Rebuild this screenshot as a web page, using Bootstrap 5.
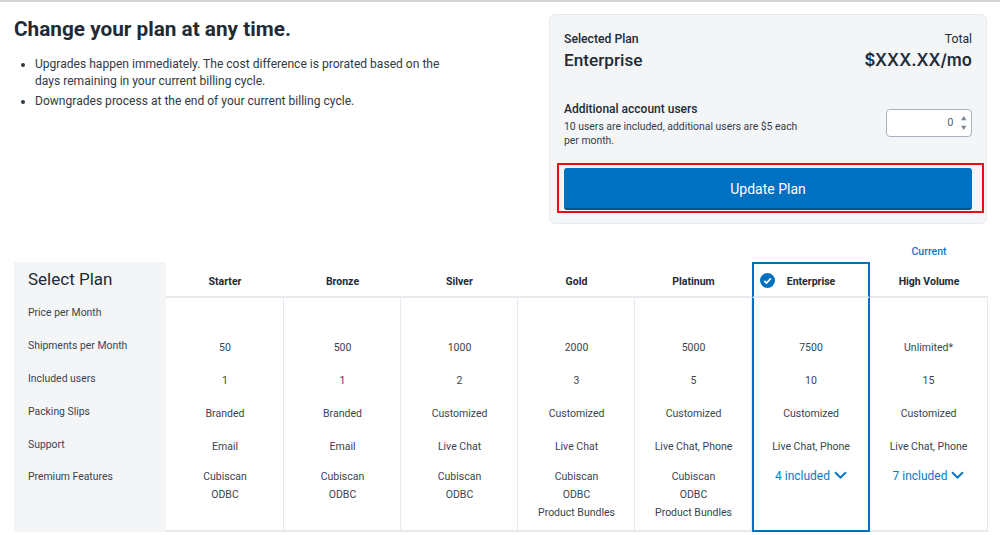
<!DOCTYPE html>
<html lang="en">
<head>
<meta charset="utf-8">
<title>Change plan</title>
<link rel="stylesheet" href="https://cdn.jsdelivr.net/npm/bootstrap@5.3.0/dist/css/bootstrap.min.css">
<style>
html,body{height:535px;overflow:hidden}
body{font-family:Roboto,"Liberation Sans",sans-serif;color:#212b36;background:#fff;border-top:2px solid #d4d5d7;font-size:12px}
.page-wrap{padding:0 12px 0 14px}
.top-area{height:239px;padding:12px 1px 0 0}
.main-title{font-size:20.75px;font-weight:700;line-height:30px;margin:0 0 11.5px}
.notes{width:435px;padding-left:21px;margin:0;line-height:17px;color:#2f3a45;font-size:12.07px}
.notes li{margin-bottom:3px}
.summary{width:438px;height:210px;background:#f4f5f7;border:1px solid #e7e9ec;border-radius:6px;padding:16px 14px 0}
.lbl-sm{line-height:16px;font-size:12.2px}
.lbl-med{font-weight:500;line-height:18px}
.lbl-sm.lbl-med{line-height:16px}
.plan-name{font-size:17.2px;font-weight:500;line-height:27px}
.plan-total{font-family:Inter,Roboto,sans-serif;font-size:16.7px;font-weight:600;line-height:27px}
.extra-row{margin-top:26px;height:49px}
.extra-note{font-size:10.4px;line-height:14px;width:245px;color:#333d48;margin-top:2px}
.num-box{width:86px;height:28px;background:#fff;border:1px solid #a9b3bf;border-radius:4px;margin-top:9px;padding-right:5px}
.num-box input{width:60px;border:0;background:transparent;text-align:right;font-size:11px;color:#555f6a;padding:0;outline:0}
.spin{width:5.5px;height:14px;margin-left:7px}
.cta-frame{border:2.5px solid #ee0a14;margin:14px 0 0 -7px;padding:2.5px 10px 1px 5px;width:427px;height:50px}
.cta-btn{display:block;width:100%;height:42px;background:#0070c0;border:0;border-bottom:2px solid #00508c;border-radius:3px;color:#fff;font-size:14px;padding:4px 0 0}
.plan-grid{table-layout:fixed;width:974px;border-collapse:separate;border-spacing:0}
.plan-grid td,.plan-grid th{padding:0;text-align:center;vertical-align:top;font-weight:400}
.r-cur{height:21px}
.r-cur th{font-size:10.5px;font-weight:500;color:#0a78c8;vertical-align:middle}
.r-head{height:36px}
.r-head th{font-size:10.5px;font-weight:700;vertical-align:top;padding-top:11px;line-height:18px;border-bottom:2px solid #e6e9ed}
.r-body{height:33px}
.r-last{height:69px}
.plan-grid .side{background:#f4f5f7;text-align:left;padding:0 0 0 14px;font-size:10.4px;color:#3a444f;border:0}
.plan-grid .side-head{font-size:17px;font-weight:400;color:#212b36;line-height:24px;padding-top:5px;border:0}
.plan-grid .val{font-size:10.5px;line-height:18px;padding:8px 0 0 1px;color:#3a444f;border-right:1px solid #e6e9ed}
.plan-grid .val.sel-col,.plan-grid .val:last-child{padding-left:0}
.plan-grid .side-txt{line-height:18px;padding-top:6px}
.r-last .val{padding-top:5px}
.r-last .side-txt{padding-top:5px}
.plan-grid .r-last .more-cell{padding-top:4px}
.r-last td{border-bottom:2px solid #e6e9ed}
.r-last td.side{border-bottom:0}
.plan-grid .sel-col{border-left:2px solid #0070c0;border-right:2px solid #0070c0}
.plan-grid th.sel-top{border-top:2px solid #0070c0;padding-top:9px;position:relative}
.plan-grid td.sel-end{border-bottom:2px solid #0070c0}
.sel-check{position:absolute;left:6px;top:9px;width:15px;height:15px}
.more-link{color:#0a78c8;font-size:12px;line-height:18px;text-decoration:none}
.more-link svg{width:13px;height:8px;margin-left:1px;vertical-align:1px}
</style>
</head>
<body>
<div class="page-wrap">
  <div class="top-area d-flex justify-content-between">
    <div>
      <h1 class="main-title">Change your plan at any time.</h1>
      <ul class="notes">
        <li>Upgrades happen immediately. The cost difference is prorated based on the days remaining in your current billing cycle.</li>
        <li>Downgrades process at the end of your current billing cycle.</li>
      </ul>
    </div>
    <div class="summary">
      <div class="d-flex justify-content-between">
        <div><div class="lbl-sm lbl-med">Selected Plan</div><div class="plan-name">Enterprise</div></div>
        <div class="text-end"><div class="lbl-sm">Total</div><div class="plan-total">$XXX.XX/mo</div></div>
      </div>
      <div class="extra-row d-flex justify-content-between align-items-start">
        <div><div class="lbl-med">Additional account users</div><div class="extra-note">10 users are included, additional users are $5 each per month.</div></div>
        <div class="num-box d-flex align-items-center justify-content-end">
          <input type="text" value="0" aria-label="Additional account users">
          <svg class="spin" viewBox="0 0 5.500 14" aria-hidden="true"><path d="M2.750 0 5.500 4.200H0Z M2.750 14 0 9.800H5.500Z" fill="#7d8792"/></svg>
        </div>
      </div>
      <div class="cta-frame"><button type="button" class="btn cta-btn">Update Plan</button></div>
    </div>
  </div>
  <table class="plan-grid">
    <colgroup><col style="width:152px"><col style="width:118px"><col style="width:117px"><col style="width:117px"><col style="width:117px"><col style="width:117px"><col style="width:118px"><col style="width:118px"></colgroup>
    <tr class="r-cur"><th></th><th></th><th></th><th></th><th></th><th></th><th></th><th>Current</th></tr>
    <tr class="r-head">
      <th class="side side-head">Select Plan</th><th>Starter</th><th>Bronze</th><th>Silver</th><th>Gold</th><th>Platinum</th>
      <th class="sel-col sel-top"><svg class="sel-check" viewBox="0 0 16 16" aria-hidden="true"><circle cx="8" cy="8" r="8" fill="#0070c0"/><path d="M4.500 8.300 7 10.700 11.500 5.800" fill="none" stroke="#fff" stroke-width="1.900"/></svg>Enterprise</th>
      <th>High Volume</th>
    </tr>
    <tr class="r-body"><td class="side side-txt">Price per Month</td><td class="val"></td><td class="val"></td><td class="val"></td><td class="val"></td><td class="val"></td><td class="val sel-col"></td><td class="val"></td></tr>
    <tr class="r-body"><td class="side side-txt">Shipments per Month</td><td class="val">50</td><td class="val">500</td><td class="val">1000</td><td class="val">2000</td><td class="val">5000</td><td class="val sel-col">7500</td><td class="val">Unlimited*</td></tr>
    <tr class="r-body"><td class="side side-txt">Included users</td><td class="val">1</td><td class="val">1</td><td class="val">2</td><td class="val">3</td><td class="val">5</td><td class="val sel-col">10</td><td class="val">15</td></tr>
    <tr class="r-body"><td class="side side-txt">Packing Slips</td><td class="val">Branded</td><td class="val">Branded</td><td class="val">Customized</td><td class="val">Customized</td><td class="val">Customized</td><td class="val sel-col">Customized</td><td class="val">Customized</td></tr>
    <tr class="r-body"><td class="side side-txt">Support</td><td class="val">Email</td><td class="val">Email</td><td class="val">Live Chat</td><td class="val">Live Chat</td><td class="val">Live Chat, Phone</td><td class="val sel-col">Live Chat, Phone</td><td class="val">Live Chat, Phone</td></tr>
    <tr class="r-last"><td class="side side-txt">Premium Features</td><td class="val">Cubiscan<br>ODBC</td><td class="val">Cubiscan<br>ODBC</td><td class="val">Cubiscan<br>ODBC</td><td class="val">Cubiscan<br>ODBC<br>Product Bundles</td><td class="val">Cubiscan<br>ODBC<br>Product Bundles</td>
      <td class="val sel-col sel-end more-cell"><a class="more-link" href="#">4 included <svg viewBox="0 0 13 8" aria-hidden="true"><path d="M1 1.300 6.500 6.500 12 1.300" fill="none" stroke="#0a78c8" stroke-width="2"/></svg></a></td>
      <td class="val more-cell"><a class="more-link" href="#">7 included <svg viewBox="0 0 13 8" aria-hidden="true"><path d="M1 1.300 6.500 6.500 12 1.300" fill="none" stroke="#0a78c8" stroke-width="2"/></svg></a></td></tr>
  </table>
</div>
<script src="https://cdn.jsdelivr.net/npm/bootstrap@5.3.0/dist/js/bootstrap.bundle.min.js"></script>
</body>
</html>
